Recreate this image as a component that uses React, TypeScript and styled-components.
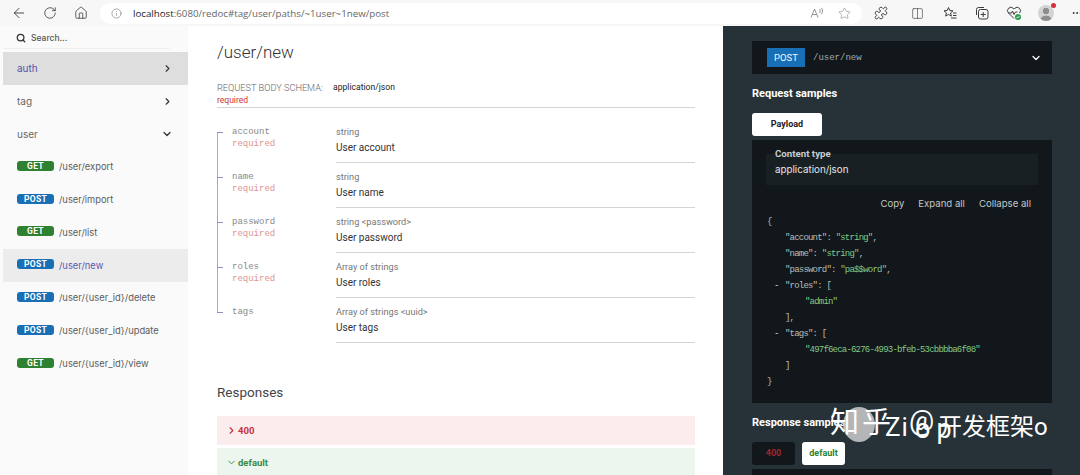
import { FunctionComponent, ReactNode } from 'react'
import styled, { createGlobalStyle } from 'styled-components'
import {
  ArrowLeft,
  ChevronDown,
  ChevronRight,
  Columns2,
  Home,
  Info,
  MoreHorizontal,
  Puzzle,
  RotateCw,
  Search,
  Star,
} from 'lucide-react'

const GlobalStyle = createGlobalStyle`
  html, body {
    margin: 0;
    padding: 0;
    background: #fff;
  }
  * {
    box-sizing: border-box;
  }
`

const navItems = [
  { method: 'GET', path: '/user/export' },
  { method: 'POST', path: '/user/import' },
  { method: 'GET', path: '/user/list' },
  { method: 'POST', path: '/user/new', active: true },
  { method: 'POST', path: '/user/{user_id}/delete' },
  { method: 'POST', path: '/user/{user_id}/update' },
  { method: 'GET', path: '/user/{user_id}/view' },
]

const properties = [
  { name: 'account', type: 'string', desc: 'User account', required: true },
  { name: 'name', type: 'string', desc: 'User name', required: true },
  { name: 'password', type: 'string <password>', desc: 'User password', required: true },
  { name: 'roles', type: 'Array of strings', desc: 'User roles', required: true },
  { name: 'tags', type: 'Array of strings <uuid>', desc: 'User tags', required: false },
]

const FavoritesIcon = () => (
  <svg width="14" height="14" viewBox="0 0 14 14" fill="none" stroke="#3c3c3c" strokeWidth="1">
    <path d="M5.5 1.5l1.3 3 3.2.3-2.4 2.1.7 3.2-2.8-1.7-2.8 1.7.7-3.2L1 4.8l3.2-.3z" />
    <path d="M10 7h3.5M10 9.500h3.500M8 12h5.500" />
  </svg>
)

const CollectionsIcon = () => (
  <svg width="14" height="14" viewBox="0 0 14 14" fill="none" stroke="#3c3c3c" strokeWidth="1">
    <rect x="3.500" y="3.500" width="9.500" height="9.500" rx="2" />
    <path d="M1.500 9V3.500a2 2 0 0 1 2-2H9M8.200 6v5M5.700 8.500h5" />
  </svg>
)

const HeartIcon = () => (
  <svg width="16" height="16" viewBox="0 0 16 16" fill="none">
    <path
      d="M8 13.500L2.500 8a3.300 3.300 0 0 1 4.700-4.700l.8.800.8-.8A3.300 3.300 0 0 1 13.500 8"
      stroke="#3c3c3c"
      strokeWidth="1"
    />
    <path d="M2.500 8h3l1-2 1.500 3.500L9.500 7h2" stroke="#3c3c3c" strokeWidth="1" />
    <circle cx="12" cy="12" r="3" fill="#2e9e4f" />
    <path d="M10.600 12l1 1 1.800-1.900" stroke="#fff" strokeWidth="0.900" />
  </svg>
)

const ReadAloudIcon = () => (
  <svg width="14" height="14" viewBox="0 0 14 14" fill="none" stroke="#8a8a8a" strokeWidth="0.900">
    <path d="M1 11.500L4.500 3 8 11.500M2.200 8.500h4.600M9.500 3c1 1 1 3 0 4M11.300 1.800c1.600 1.600 1.600 4.800 0 6.400" />
  </svg>
)

const ToolSlot: FunctionComponent<{ width: number; children: ReactNode }> = ({ width, children }) => (
  <ToolCell $width={width}>{children}</ToolCell>
)

const App: FunctionComponent = () => {
  return (
    <Page>
      <GlobalStyle />
      <Toolbar>
        <ToolSlot width={38}>
          <ArrowLeft size={16} strokeWidth={1.300} />
        </ToolSlot>
        <ToolSlot width={24}>
          <RotateCw size={14} strokeWidth={1.300} />
        </ToolSlot>
        <ToolSlot width={38}>
          <Home size={14} strokeWidth={1.300} />
        </ToolSlot>
        <AddressBar>
          <Info size={11} strokeWidth={1.200} color="#666" />
          <Url>
            <strong>localhost</strong>:6080/redoc#tag/user/paths/~1user~1new/post
          </Url>
          <AddressActions>
            <ReadAloudIcon />
            <Star size={13} strokeWidth={1} color="#777" />
          </AddressActions>
        </AddressBar>
        <ToolSlot width={38}>
          <Puzzle size={14} strokeWidth={1.500} />
        </ToolSlot>
        <ToolSeparator />
        <ToolSlot width={32}>
          <Columns2 size={13} strokeWidth={1.100} />
        </ToolSlot>
        <ToolSlot width={33}>
          <FavoritesIcon />
        </ToolSlot>
        <ToolSlot width={31}>
          <CollectionsIcon />
        </ToolSlot>
        <ToolSlot width={33}>
          <HeartIcon />
        </ToolSlot>
        <ToolSlot width={31}>
          <Avatar />
        </ToolSlot>
        <ToolSlot width={31}>
          <MoreHorizontal size={12} />
        </ToolSlot>
      </Toolbar>

      <Body>
        <Sidebar>
          <SearchRow>
            <Search size={10} strokeWidth={3} color="#333" />
            <SearchText>Search...</SearchText>
          </SearchRow>
          <NavRow $selected>
            <NavLabel $accent>auth</NavLabel>
            <ChevronRight size={11} strokeWidth={2.500} color="#333" />
          </NavRow>
          <NavRow>
            <NavLabel>tag</NavLabel>
            <ChevronRight size={11} strokeWidth={2.500} color="#333" />
          </NavRow>
          <NavRow>
            <NavLabel>user</NavLabel>
            <ChevronDown size={12} strokeWidth={2.500} color="#333" />
          </NavRow>
          {navItems.map(item => (
            <OperationRow key={item.path} $active={item.active}>
              <MethodBadge $method={item.method}>{item.method}</MethodBadge>
              <OperationPath $active={item.active}>{item.path}</OperationPath>
            </OperationRow>
          ))}
        </Sidebar>

        <Main>
          <Title>/user/new</Title>
          <SchemaHeader>
            <SchemaLabel>REQUEST BODY SCHEMA:</SchemaLabel>
            <SchemaType>application/json</SchemaType>
          </SchemaHeader>
          <SchemaRequired>required</SchemaRequired>
          <PropertyList>
            {properties.map((prop, index) => (
              <PropertyRow key={prop.name}>
                <PropertyName $first={index === 0} $last={index === properties.length - 1}>
                  <Tick />
                  <div>
                    <PropertyKey>{prop.name}</PropertyKey>
                    {prop.required && <PropertyRequired>required</PropertyRequired>}
                  </div>
                </PropertyName>
                <PropertyDetail>
                  <PropertyType>{prop.type}</PropertyType>
                  <PropertyDesc>{prop.desc}</PropertyDesc>
                </PropertyDetail>
              </PropertyRow>
            ))}
          </PropertyList>
          <ResponsesTitle>Responses</ResponsesTitle>
          <ResponseBar $status="error">
            <ChevronRight size={11} strokeWidth={2.500} />
            400
          </ResponseBar>
          <ResponseBar $status="success">
            <ChevronDown size={11} strokeWidth={2} />
            default
          </ResponseBar>
        </Main>

        <RightPanel>
          <EndpointBar>
            <EndpointMethod>POST</EndpointMethod>
            <EndpointPath>/user/new</EndpointPath>
            <ChevronDown size={12} strokeWidth={2.500} color="#fff" />
          </EndpointBar>
          <PanelHeading>Request samples</PanelHeading>
          <TabRow>
            <SampleTab $width={70}>Payload</SampleTab>
          </TabRow>
          <SampleBlock>
            <ContentTypeBox>
              <ContentTypeLabel>Content type</ContentTypeLabel>
              <ContentTypeValue>application/json</ContentTypeValue>
            </ContentTypeBox>
            <CopyRow>
              <span>Copy</span>
              <span>Expand all</span>
              <span>Collapse all</span>
            </CopyRow>
            <Code>
              <CodeLine $indent={0}>{'{'}</CodeLine>
              <CodeLine $indent={18}>
                "account": <Str>"string"</Str>,
              </CodeLine>
              <CodeLine $indent={18}>
                "name": <Str>"string"</Str>,
              </CodeLine>
              <CodeLine $indent={18}>
                "password": <Str>"pa$$word"</Str>,
              </CodeLine>
              <CodeLine $indent={7}>
                <Collapser>-</Collapser>"roles": [
              </CodeLine>
              <CodeLine $indent={38}>
                <Str>"admin"</Str>
              </CodeLine>
              <CodeLine $indent={18}>],</CodeLine>
              <CodeLine $indent={7}>
                <Collapser>-</Collapser>"tags": [
              </CodeLine>
              <CodeLine $indent={38}>
                <Str>"497f6eca-6276-4993-bfeb-53cbbbba6f08"</Str>
              </CodeLine>
              <CodeLine $indent={18}>]</CodeLine>
              <CodeLine $indent={0}>{'}'}</CodeLine>
            </Code>
          </SampleBlock>
          <PanelHeading>Response samples</PanelHeading>
          <TabRow $gap={7}>
            <SampleTab $width={43} $tone="error">400</SampleTab>
            <SampleTab $width={43} $tone="success">default</SampleTab>
          </TabRow>
          <SampleBlock />
        </RightPanel>
      </Body>

      <WatermarkBubble />
      <WatermarkText $left={830} $top={405} $size={29} $spacing={3}>知乎</WatermarkText>
      <WatermarkText $left={885} $top={409} $size={26} $spacing={1}>Zi</WatermarkText>
      <WatermarkText $left={909} $top={403} $size={28}>@</WatermarkText>
      <WatermarkText $left={915} $top={411} $size={27} $spacing={6}>op</WatermarkText>
      <WatermarkText $left={938} $top={409} $size={24}>开发框架o</WatermarkText>
    </Page>
  )
}

export default App

const Page = styled.div`
  position: relative;
  width: 1080px;
  height: 475px;
  overflow: hidden;
  font-family: Roboto, 'Liberation Sans', sans-serif;
`

const Toolbar = styled.div`
  display: flex;
  align-items: center;
  height: 26px;
  background: #f7f7f7;
  color: #333;
`

const ToolCell = styled.div<{ $width: number }>`
  display: flex;
  align-items: center;
  justify-content: center;
  flex: 0 0 ${props => props.$width}px;
`

const ToolSeparator = styled.div`
  width: 1px;
  height: 11px;
  margin-right: 1px;
  background: #ddd;
`

const AddressBar = styled.div`
  display: flex;
  align-items: center;
  flex: 0 0 762px;
  height: 21px;
  padding: 0 11px;
  border-radius: 11px;
  background: #fff;
`

const Url = styled.span`
  margin-left: 11px;
  font-family: 'Open Sans', sans-serif;
  font-size: 9.730px;
  color: #666;
  white-space: nowrap;

  strong {
    font-weight: 400;
    color: #1c1c1c;
  }
`

const AddressActions = styled.div`
  display: flex;
  align-items: center;
  gap: 14px;
  margin-left: auto;
`

const Avatar = styled.div`
  position: relative;
  width: 16px;
  height: 16px;
  border-radius: 50%;
  background: radial-gradient(circle at 50% 38%, #8e8e8e 0 3px, transparent 3.500px),
    radial-gradient(circle at 50% 105%, #8e8e8e 0 6px, transparent 6.500px), #d3d3d3;

  &::after {
    content: '';
    position: absolute;
    top: -2px;
    right: -2px;
    width: 5px;
    height: 5px;
    border-radius: 50%;
    background: #d32f3f;
  }
`

const Body = styled.div`
  display: flex;
  height: 449px;
`

const Sidebar = styled.nav`
  flex: 0 0 188px;
  padding-left: 3px;
  background: #fafafa;
  font-family: Inter, sans-serif;
`

const SearchRow = styled.div`
  display: flex;
  align-items: center;
  gap: 5px;
  height: 23px;
  margin: 0 18px 3px 0;
  padding: 1px 0 0 13px;
  border-bottom: 1px solid #eee;
`

const SearchText = styled.span`
  font-size: 8.500px;
  font-weight: 500;
  color: #555;
`

const NavRow = styled.div<{ $selected?: boolean }>`
  display: flex;
  align-items: center;
  justify-content: space-between;
  height: 32.800px;
  padding: 0 15px 0 14px;
  background: ${props => (props.$selected ? '#dedede' : 'transparent')};
`

const NavLabel = styled.span<{ $accent?: boolean }>`
  font-size: 10px;
  color: ${props => (props.$accent ? '#32329f' : '#333')};
  opacity: ${props => (props.$accent ? 0.8 : 0.75)};
`

const OperationRow = styled.div<{ $active?: boolean }>`
  display: flex;
  align-items: center;
  gap: 5px;
  height: 32.800px;
  padding-left: 14px;
  background: ${props => (props.$active ? '#ececec' : 'transparent')};
`

const MethodBadge = styled.span<{ $method: string }>`
  flex: 0 0 37px;
  height: 10px;
  margin-top: -2px;
  border-radius: 3px;
  background: ${props => (props.$method === 'GET' ? '#2f8132' : '#186fb5')};
  color: #fff;
  font-family: Roboto, sans-serif;
  font-size: 8.500px;
  font-weight: 700;
  line-height: 10px;
  letter-spacing: 0.300px;
  text-align: center;
`

const OperationPath = styled.span<{ $active?: boolean }>`
  font-size: 9.350px;
  color: ${props => (props.$active ? '#32329f' : '#333')};
  opacity: 0.8;
  white-space: nowrap;
`

const Main = styled.main`
  flex: 0 0 535px;
  padding: 0 28px 0 29px;
  background: #fff;
`

const Title = styled.h1`
  margin: 15px 0 0;
  font-size: 17px;
  font-weight: 300;
  line-height: 23px;
  color: #333;
`

const SchemaHeader = styled.div`
  display: flex;
  align-items: center;
  margin-top: 17px;
  height: 12px;
`

const SchemaLabel = styled.span`
  flex: 0 0 116px;
  font-size: 9.200px;
  font-weight: 300;
  color: #666;
`

const SchemaType = styled.span`
  font-size: 8.600px;
  color: #222;
`

const SchemaRequired = styled.div`
  height: 14px;
  font-size: 8.500px;
  line-height: 14px;
  color: #c33;
`

const PropertyList = styled.div`
  padding-top: 10px;
  border-top: 1px solid #d4d4d4;
`

const PropertyRow = styled.div`
  display: flex;
  height: 45px;
`

const PropertyName = styled.div<{ $first?: boolean; $last?: boolean }>`
  display: flex;
  align-items: flex-start;
  flex: 0 0 119px;
  padding-top: 9px;
  background-image: linear-gradient(#a9a9d0, #a9a9d0);
  background-repeat: no-repeat;
  background-position: 0 ${props => (props.$first ? '14px' : '0')};
  background-size: 1px ${props => (props.$last ? '15px' : '100%')};
`

const Tick = styled.span`
  flex: 0 0 6px;
  height: 1px;
  margin: 5px 9px 0 0;
  background: #8f8fb8;
`

const PropertyKey = styled.div`
  font-family: 'Liberation Mono', monospace;
  font-size: 9px;
  line-height: 11px;
  color: #888;
`

const PropertyRequired = styled(PropertyKey)`
  margin-top: 1px;
  color: #dc9490;
`

const PropertyDetail = styled.div`
  flex: 1;
  padding-top: 8px;
  border-bottom: 1px solid #d4d4d4;
`

const PropertyType = styled.div`
  font-size: 9.200px;
  line-height: 12px;
  color: #777;
`

const PropertyDesc = styled.div`
  margin-top: 3px;
  font-size: 10px;
  line-height: 13px;
  color: #333;
`

const ResponsesTitle = styled.h2`
  margin: 41px 0 0;
  height: 32px;
  font-size: 13.500px;
  font-weight: 400;
  line-height: 17px;
  color: #444;
`

const ResponseBar = styled.div<{ $status: 'error' | 'success' }>`
  display: flex;
  align-items: center;
  gap: 1px;
  height: 29px;
  margin-bottom: 3px;
  padding-left: 9px;
  font-size: 9.500px;
  font-weight: 700;
  color: ${props => (props.$status === 'error' ? '#c5313f' : '#3b8a45')};
  background: ${props => (props.$status === 'error' ? '#fbeded' : '#ecf5ee')};
`

const RightPanel = styled.aside`
  flex: 0 0 357px;
  padding: 15px 28px 0 29px;
  background: #263238;
`

const EndpointBar = styled.div`
  display: flex;
  align-items: center;
  height: 33px;
  padding: 0 10px 0 15px;
  background: #11171a;
`

const EndpointMethod = styled.span`
  flex: 0 0 38px;
  height: 19px;
  background: #186fb5;
  color: #f4f8fb;
  font-size: 9.500px;
  line-height: 19px;
  text-align: center;
`

const EndpointPath = styled.span`
  flex: 1;
  margin-left: 8px;
  font-family: 'Liberation Mono', monospace;
  font-size: 9px;
  color: #a4acb0;
`

const PanelHeading = styled.h3`
  margin: 13px 0 0;
  height: 26px;
  font-size: 11px;
  font-weight: 700;
  line-height: 14px;
  color: #fff;
`

const TabRow = styled.div<{ $gap?: number }>`
  display: flex;
  gap: ${props => props.$gap ?? 0}px;
`

const SampleTab = styled.div<{ $width: number; $tone?: 'error' | 'success' }>`
  flex: 0 0 ${props => props.$width}px;
  height: 23px;
  border-radius: 3px;
  background: ${props => (props.$tone === 'error' ? '#11171a' : '#fff')};
  color: ${props =>
    props.$tone === 'error' ? '#a3262e' : props.$tone === 'success' ? '#2f8132' : '#222'};
  font-size: 9px;
  font-weight: 700;
  line-height: 22px;
  text-align: center;
`

const SampleBlock = styled.div`
  min-height: 6px;
  margin-top: 4px;
  padding: 14px 14px 13px;
  background: #11171a;
`

const ContentTypeBox = styled.div`
  height: 31px;
  padding-left: 9px;
  background: #192024;
`

const ContentTypeLabel = styled.div`
  position: relative;
  top: -5px;
  font-size: 9.700px;
  font-weight: 700;
  line-height: 10px;
  color: #c8ccce;
`

const ContentTypeValue = styled.div`
  font-family: Inter, sans-serif;
  font-size: 9.800px;
  line-height: 12px;
  color: #e4e6e7;
`

const CopyRow = styled.div`
  display: flex;
  justify-content: flex-end;
  gap: 14px;
  height: 29px;
  padding: 13px 7px 0 0;
  font-family: Inter, sans-serif;
  font-size: 9.600px;
  line-height: 12px;
  color: #c4c8ca;
`

const Code = styled.div`
  padding-top: 0;
`

const CodeLine = styled.div<{ $indent: number }>`
  height: 16px;
  padding-left: ${props => props.$indent + 1}px;
  font-family: 'Liberation Mono', monospace;
  font-size: 9px;
  line-height: 16px;
  letter-spacing: -0.800px;
  color: #b9bcbd;
  white-space: nowrap;
`

const Str = styled.span`
  color: #86c786;
`

const Collapser = styled.span`
  display: inline-block;
  width: 11px;
  color: #d6d8d9;
`

const WatermarkBubble = styled.div`
  position: absolute;
  left: 843px;
  top: 407px;
  width: 32px;
  height: 35px;
  border-radius: 50%;
  background: rgba(205, 205, 205, 0.85);
`

const WatermarkText = styled.span<{ $left: number; $top: number; $size: number; $spacing?: number }>`
  position: absolute;
  left: ${props => props.$left}px;
  top: ${props => props.$top}px;
  font-family: Roboto, 'Noto Sans CJK SC', sans-serif;
  font-size: ${props => props.$size}px;
  font-weight: 400;
  line-height: 36px;
  letter-spacing: ${props => props.$spacing ?? 0}px;
  color: #fff;
  white-space: nowrap;
`
